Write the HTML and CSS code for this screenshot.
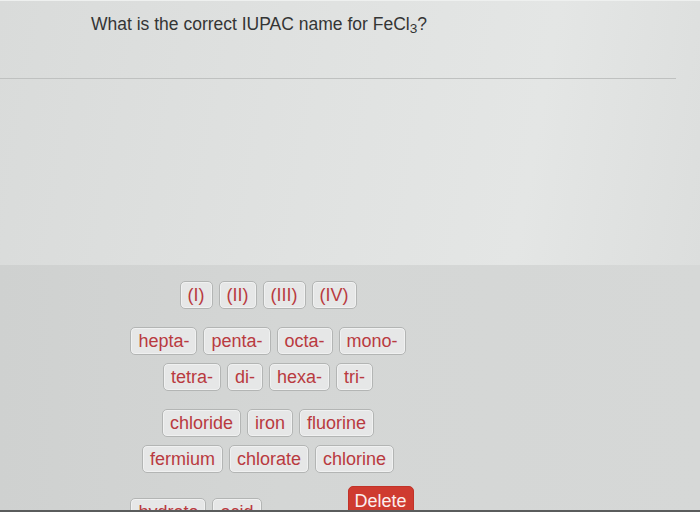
FILE: index.html
```html
<!DOCTYPE html>
<html lang="en">
<head>
<meta charset="utf-8">
<title>IUPAC name</title>
<link rel="stylesheet" href="styles.css">
</head>
<body>
<div class="top">
  <p class="question">What is the correct IUPAC name for FeCl<sub>3</sub>?</p>
  <div class="rule"></div>
</div>
<div class="panel">
  <div class="board">
    <div class="group">
      <div class="row">
        <span class="chip">(I)</span>
        <span class="chip">(II)</span>
        <span class="chip">(III)</span>
        <span class="chip">(IV)</span>
      </div>
    </div>
    <div class="group">
      <div class="row">
        <span class="chip">hepta-</span>
        <span class="chip">penta-</span>
        <span class="chip">octa-</span>
        <span class="chip">mono-</span>
      </div>
      <div class="row">
        <span class="chip">tetra-</span>
        <span class="chip">di-</span>
        <span class="chip">hexa-</span>
        <span class="chip">tri-</span>
      </div>
    </div>
    <div class="group">
      <div class="row">
        <span class="chip">chloride</span>
        <span class="chip">iron</span>
        <span class="chip">fluorine</span>
      </div>
      <div class="row">
        <span class="chip">fermium</span>
        <span class="chip">chlorate</span>
        <span class="chip">chlorine</span>
      </div>
    </div>
    <div class="group last">
      <div class="row actions">
        <span class="chip low">hydrate</span>
        <span class="chip low">acid</span>
        <button class="delete">Delete</button>
      </div>
    </div>
  </div>
</div>
<div class="edge"></div>
</body>
</html>
```

FILE: styles.css
```css
html, body {
  margin: 0;
  padding: 0;
}

body {
  width: 700px;
  height: 512px;
  overflow: hidden;
  font-family: "Liberation Sans", Arial, sans-serif;
  background: #d5d7d6;
}

.top {
  height: 265px;
  background: linear-gradient(100deg, #d9dbda 0%, #e0e2e1 45%, #e4e6e5 75%, #dcdedd 100%);
  border-top: 1px solid #eef0ef;
  box-sizing: border-box;
}

.question {
  margin: 0;
  padding: 13px 0 0 91px;
  font-size: 17.5px;
  line-height: 20px;
  color: #343535;
}

.question sub {
  font-size: 0.78em;
  vertical-align: -0.2em;
  line-height: 0;
}

.rule {
  margin-top: 44px;
  width: 676px;
  height: 1px;
  background: #bfc1c0;
}

.panel {
  height: 247px;
  background: linear-gradient(90deg, #cfd1d0 0%, #d4d6d5 40%, #d6d8d7 100%);
  padding-top: 16px;
  box-sizing: border-box;
}

.board {
  width: 536px;
  display: flex;
  flex-direction: column;
  gap: 18px;
}

.group {
  display: flex;
  flex-direction: column;
  gap: 8px;
}

.group.last {
  margin-top: -5px;
}

.row {
  display: flex;
  justify-content: center;
  gap: 6px;
}

.chip {
  display: inline-block;
  font-size: 18px;
  line-height: 20px;
  padding: 3px 7px;
  border: 1px solid #b3b5b4;
  border-radius: 5px;
  background: #e6e7e7;
  color: #b93a40;
  box-shadow: inset 0 0 0 1px #f0f1f1;
}

.actions {
  align-items: flex-start;
  padding-left: 8px;
}

.chip.low {
  margin-top: 12px;
}

.delete {
  margin-left: 80px;
  font-family: "Liberation Sans", Arial, sans-serif;
  font-size: 18px;
  line-height: 20px;
  padding: 4px 6px 6px;
  border: 1px solid #c13228;
  border-radius: 5px;
  background: #cf3b30;
  color: #fbeeee;
}

.edge {
  position: fixed;
  left: 0;
  bottom: 0;
  width: 700px;
  height: 2px;
  background: #5a5c5c;
}
```
